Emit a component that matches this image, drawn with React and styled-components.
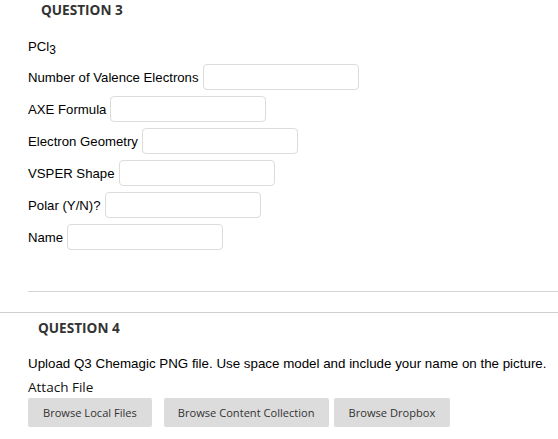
import React from "react";
import styled, { createGlobalStyle } from "styled-components";

const Global = createGlobalStyle`
  html, body { margin: 0; padding: 0; background: #fff; }
  body { font-family: "Liberation Sans", Arial, sans-serif; color: #111; }
  * { box-sizing: border-box; }
`;

const Page = styled.div`
  display: flex;
  flex-direction: column;
  width: 558px;
  height: 439px;
  overflow: hidden;
`;

const QuestionTitle = styled.h2`
  margin: ${(p) => p.$top || 0}px 0 0 0;
  padding-left: ${(p) => p.$indent}px;
  height: 20px;
  flex: none;
  font-family: "Open Sans", sans-serif;
  font-weight: 700;
  font-size: 13.6px;
  line-height: 20px;
  color: #333;
`;

const Body = styled.div`
  display: flex;
  flex-direction: column;
  flex: none;
  padding-left: 28px;
`;

const Formula = styled.div`
  margin-top: 19px;
  margin-bottom: 9px;
  height: 16px;
  font-size: 13.2px;
  line-height: 16px;
  color: #000;
  sub {
    font-size: 12px;
    line-height: 0;
    vertical-align: -3px;
  }
`;

const Row = styled.label`
  display: flex;
  align-items: center;
  gap: 4px;
  height: 26px;
  margin-bottom: 6px;
  font-size: 13.2px;
  color: #000;
`;

const TextInput = styled.input`
  width: 156px;
  height: 26px;
  margin: 0;
  border: 1px solid #dcdcdc;
  border-radius: 4px;
  background: #fff;
  padding: 0 6px;
  font-size: 13px;
  outline: none;
`;

const Divider = styled.div`
  flex: none;
  margin: ${(p) => p.$top}px 0 0 ${(p) => p.$left}px;
  height: 1px;
  background: ${(p) => p.$color};
`;

const Prompt = styled.p`
  margin: 18px 0 0 0;
  font-size: 13.35px;
  line-height: 16px;
  color: #000;
`;

const AttachLabel = styled.div`
  margin-top: 7px;
  font-family: "Open Sans", sans-serif;
  font-size: 13.5px;
  line-height: 16px;
  color: #111;
`;

const Buttons = styled.div`
  display: flex;
  margin-top: 3px;
`;

const BrowseButton = styled.button`
  height: 29px;
  padding: 0 ${(p) => p.$pad || 14}px;
  margin: 0 ${(p) => p.$gap || 0}px 0 0;
  border: 0;
  border-radius: 2px;
  background: #dcdcdc;
  font-family: "Open Sans", sans-serif;
  font-size: 11.1px;
  color: #333;
  cursor: pointer;
`;

const fields = [
  "Number of Valence Electrons",
  "AXE Formula",
  "Electron Geometry",
  "VSPER Shape",
  "Polar (Y/N)?",
  "Name",
];

export default function App() {
  return (
    <Page>
      <Global />
      <QuestionTitle $indent={41}>QUESTION 3</QuestionTitle>
      <Body>
        <Formula>
          PCl<sub>3</sub>
        </Formula>
        {fields.map((f) => (
          <Row key={f}>
            {f}
            <TextInput type="text" />
          </Row>
        ))}
      </Body>
      <Divider $top={35} $left={28} $color="#d4d4d4" />
      <Divider $top={20} $left={0} $color="#cfcfcf" />
      <QuestionTitle $indent={38} $top={5}>QUESTION 4</QuestionTitle>
      <Body>
        <Prompt>
          Upload Q3 Chemagic PNG file. Use space model and include your name on the picture.
        </Prompt>
        <AttachLabel>Attach File</AttachLabel>
        <Buttons>
          <BrowseButton $pad={15} $gap={12}>Browse Local Files</BrowseButton>
          <BrowseButton $gap={5}>Browse Content Collection</BrowseButton>
          <BrowseButton $pad={15}>Browse Dropbox</BrowseButton>
        </Buttons>
      </Body>
    </Page>
  );
}
